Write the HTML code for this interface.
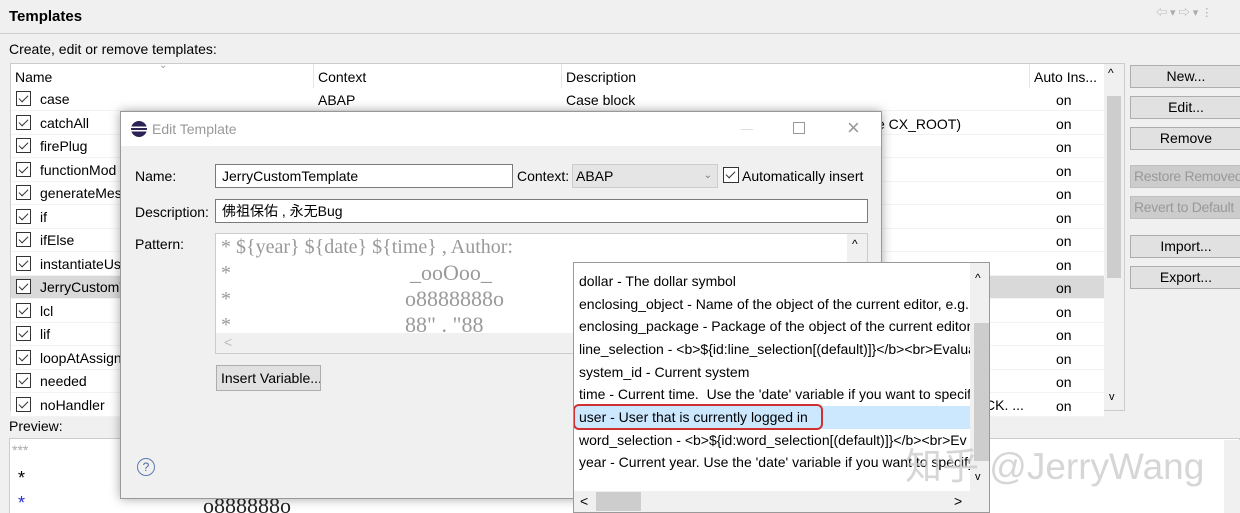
<!DOCTYPE html>
<html><head><meta charset="utf-8"><style>
*{box-sizing:border-box;margin:0;padding:0}
html,body{width:1240px;height:513px;overflow:hidden}
body{background:#f0f0f0;font-family:"Liberation Sans","Noto Sans CJK SC",sans-serif;font-size:14px;color:#000;position:relative}
.a{position:absolute;white-space:nowrap}
.row{position:absolute;left:11px;width:1093px;height:23px;border-bottom:1px solid #f3f3f3}
.cb{position:absolute;left:5px;top:3px;width:15px;height:15px;border:1px solid #333;background:#fff}
.cb:after{content:"";position:absolute;left:4px;top:1px;width:4px;height:8px;border:solid #333;border-width:0 1.5px 1.5px 0;transform:rotate(45deg)}
.btn{position:absolute;left:1130px;width:112px;height:23px;background:#e1e1e1;border:1px solid #adadad;text-align:center;line-height:21px;white-space:nowrap;overflow:hidden}
.dis{color:#999;background:#ccc;border-color:#bfbfbf;text-align:left;padding-left:3px;letter-spacing:-0.3px}
.field{position:absolute;background:#fff;border:1px solid #7a7a7a;height:24px;line-height:22px;padding-left:6px}
.pi{position:absolute;left:5px;height:22px;line-height:22px;white-space:nowrap}
.serif{font-family:"Liberation Serif",serif;color:#999}
</style></head><body>
<div class="a" style="left:9px;top:8px;font-weight:bold;font-size:15px">Templates</div>
<div class="a" style="left:1156px;top:4px;color:#aaa;font-size:11px">⇦ ▾ ⇨ ▾ ⋮</div>
<div class="a" style="left:0;top:33px;width:1240px;height:1px;background:#d0d0d0"></div>
<div class="a" style="left:9px;top:41px">Create, edit or remove templates:</div>

<div class="a" style="left:10px;top:63px;width:1115px;height:348px;background:#fff;border:1px solid #ccc;overflow:hidden">
<div class="a" style="left:0;top:0;width:1093px;height:24px;background:#fff"></div>
<div class="a" style="left:4px;top:5px">Name</div>
<div class="a" style="left:148px;top:-4px;color:#999;font-size:10px">⌄</div>
<div class="a" style="left:302px;top:0;width:1px;height:24px;background:#e5e5e5"></div>
<div class="a" style="left:307px;top:5px">Context</div>
<div class="a" style="left:550px;top:0;width:1px;height:24px;background:#e5e5e5"></div>
<div class="a" style="left:555px;top:5px">Description</div>
<div class="a" style="left:1018px;top:0;width:1px;height:24px;background:#e5e5e5"></div>
<div class="a" style="left:1023px;top:5px">Auto Ins...</div>
<div class="a" style="left:1093px;top:0;width:20px;height:346px;background:#f0f0f0"></div>
<div class="a" style="left:1097px;top:2px;font-size:12px">^</div>
<div class="a" style="left:1096px;top:32px;width:14px;height:182px;background:#cdcdcd"></div>
<div class="a" style="left:1098px;top:327px;font-size:11px">v</div>
</div>
<div id="rows"></div>
<div class="a" style="left:318px;top:92px">ABAP</div>
<div class="a" style="left:566px;top:92px">Case block</div>
<div class="a" style="left:877px;top:116px">e CX_ROOT)</div>
<div class="a" style="left:985px;top:397px">CK. ...</div>

<div class="btn" style="top:65px">New...</div>
<div class="btn" style="top:96px">Edit...</div>
<div class="btn" style="top:127px">Remove</div>
<div class="btn dis" style="top:165px">Restore Removed</div>
<div class="btn dis" style="top:196px">Revert to Default</div>
<div class="btn" style="top:235px">Import...</div>
<div class="btn" style="top:266px">Export...</div>

<div class="a" style="left:9px;top:418px">Preview:</div>
<div class="a" style="left:9px;top:438px;width:1231px;height:80px;background:#fff;border:1px solid #ccc"></div>
<div class="a" style="left:1224px;top:440px;width:16px;height:73px;background:#f0f0f0"></div>
<div class="a" style="left:12px;top:442px;color:#aaa">***</div>
<div class="a" style="left:18px;top:468px;font-size:18px">*</div>
<div class="a" style="left:18px;top:493px;font-size:18px;color:#2a2ad0">*</div>
<div class="a serif" style="left:203px;top:493px;font-size:22px;color:#222">o888888o</div>

<!-- dialog -->
<div class="a" style="left:120px;top:111px;width:762px;height:388px;background:#f0f0f0;border:1px solid #999;box-shadow:0 0 10px rgba(0,0,0,.35)">
<div class="a" style="left:0;top:0;width:760px;height:34px;background:#fff"></div>
<div class="a" style="left:10px;top:9px;width:16px;height:16px;border-radius:50%;background:linear-gradient(#2c2255 0 35%,#fff 35% 45%,#2c2255 45% 55%,#fff 55% 65%,#2c2255 65%)"></div>
<div class="a" style="left:31px;top:9px;color:#999">Edit Template</div>
<div class="a" style="left:620px;top:17px;width:12px;height:1px;background:#ddd"></div>
<div class="a" style="left:672px;top:10px;width:12px;height:12px;border:1px solid #999"></div>
<div class="a" style="left:726px;top:3px;font-size:22px;color:#999">×</div>
</div>
<div class="a" style="left:135px;top:168px">Name:</div>
<div class="field" style="left:215px;top:164px;width:298px">JerryCustomTemplate</div>
<div class="a" style="left:517px;top:168px">Context:</div>
<div class="a" style="left:572px;top:164px;width:146px;height:24px;background:#e5e5e5;border:1px solid #ccc;line-height:22px;padding-left:3px">ABAP<span style="position:absolute;right:5px;color:#777;font-size:10px">⌄</span></div>
<div class="a" style="left:723px;top:167px;width:16px;height:16px;border:1px solid #333;background:#fff"><div style="position:absolute;left:4px;top:1px;width:5px;height:9px;border:solid #333;border-width:0 1.5px 1.5px 0;transform:rotate(45deg)"></div></div>
<div class="a" style="left:742px;top:168px">Automatically insert</div>
<div class="a" style="left:135px;top:204px">Description:</div>
<div class="field" style="left:215px;top:199px;width:653px">佛祖保佑 , 永无Bug</div>
<div class="a" style="left:135px;top:236px">Pattern:</div>
<div class="a" style="left:215px;top:233px;width:653px;height:121px;background:#fff;border:1px solid #ccc;overflow:hidden">
<div class="a serif" style="left:5px;top:2px;font-size:20px">* ${year} ${date} ${time} , Author:</div>
<div class="a serif" style="left:5px;top:28px;font-size:20px">*</div><div class="a serif" style="left:194px;top:26px;font-size:22px">_ooOoo_</div>
<div class="a serif" style="left:5px;top:54px;font-size:20px">*</div><div class="a serif" style="left:189px;top:52px;font-size:22px">o8888888o</div>
<div class="a serif" style="left:5px;top:80px;font-size:20px">*</div><div class="a serif" style="left:189px;top:78px;font-size:22px">88" . "88</div>
<div class="a" style="left:0;top:99px;width:651px;height:20px;background:#f0f0f0"></div>
<div class="a" style="left:8px;top:100px;color:#bbb">&lt;</div>
<div class="a" style="left:631px;top:0;width:20px;height:100px;background:#f0f0f0"></div>
<div class="a" style="left:636px;top:3px;font-size:12px">^</div>
</div>
<div class="a" style="left:216px;top:365px;width:105px;height:26px;background:#e1e1e1;border:1px solid #adadad;line-height:24px;padding-left:4px;overflow:hidden">Insert Variable...</div>
<div class="a" style="left:137px;top:458px;width:18px;height:18px;border:1px solid #5a7ab0;border-radius:50%;text-align:center;line-height:16px;font-size:12px;color:#4a6aa0">?</div>

<!-- popup -->
<div class="a" style="left:573px;top:262px;width:417px;height:251px;background:#fff;border:1px solid #999;overflow:hidden">
<div class="a" style="left:0;top:143px;width:396px;height:23px;background:#cce8ff"></div>
<div class="pi" style="top:7px">dollar - The dollar symbol</div>
<div class="pi" style="top:30px">enclosing_object - Name of the object of the current editor, e.g.</div>
<div class="pi" style="top:52px">enclosing_package - Package of the object of the current editor</div>
<div class="pi" style="top:75px">line_selection - &lt;b&gt;${id:line_selection[(default)]}&lt;/b&gt;&lt;br&gt;Evalua</div>
<div class="pi" style="top:98px">system_id - Current system</div>
<div class="pi" style="top:120px">time - Current time.&nbsp; Use the 'date' variable if you want to specif</div>
<div class="pi" style="top:143px">user - User that is currently logged in</div>
<div class="pi" style="top:166px">word_selection - &lt;b&gt;${id:word_selection[(default)]}&lt;/b&gt;&lt;br&gt;Ev</div>
<div class="pi" style="top:188px">year - Current year. Use the 'date' variable if you want to specify</div>
<div class="a" style="left:-1px;top:141px;width:250px;height:26px;border:2px solid #d03030;border-radius:6px"></div>
<div class="a" style="left:396px;top:0;width:20px;height:228px;background:#f0f0f0"></div>
<div class="a" style="left:400px;top:60px;width:15px;height:138px;background:#cdcdcd"></div>
<div class="a" style="left:401px;top:8px;font-size:12px">^</div>
<div class="a" style="left:401px;top:208px;font-size:11px">v</div>
<div class="a" style="left:0;top:228px;width:416px;height:22px;background:#f0f0f0"></div>
<div class="a" style="left:22px;top:229px;width:45px;height:19px;background:#cdcdcd"></div>
<div class="a" style="left:6px;top:230px">&lt;</div>
<div class="a" style="left:380px;top:230px">&gt;</div>
</div>
<div class="a" style="left:905px;top:436px;font-size:37px;color:rgba(200,200,200,.75)">知乎 @JerryWang</div>

<script>
var names=["case","catchAll","firePlug","functionMod","generateMes","if","ifElse","instantiateUs","JerryCustomT","lcl","lif","loopAtAssign","needed","noHandler"];
var h="";
for(var i=0;i<names.length;i++){var t=88+i*23.5;
h+='<div class="row" style="top:'+t+'px;'+(i==8?'background:#d9d9d9':'background:#fff')+'"><div class="cb"></div><div class="a" style="left:29px;top:3px">'+names[i]+'</div><div class="a" style="left:1045px;top:4px">on</div></div>';}
document.getElementById("rows").innerHTML=h;
</script>
</body></html>
